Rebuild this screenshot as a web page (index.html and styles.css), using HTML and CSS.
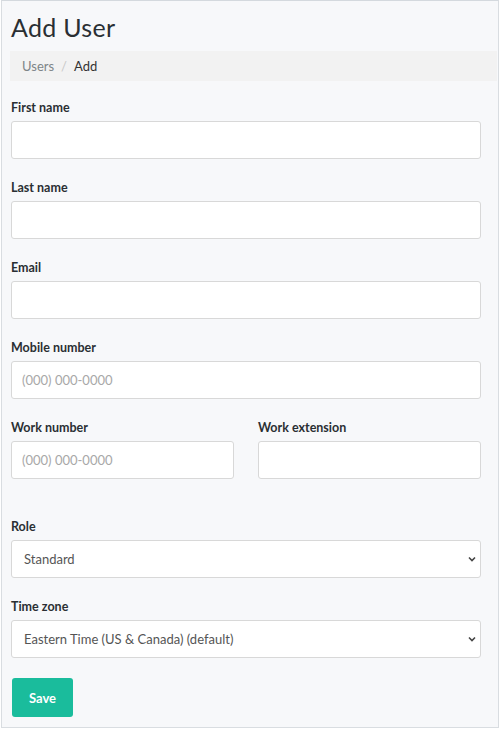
FILE: index.html
```html
<!DOCTYPE html>
<html lang="en">
<head>
<meta charset="utf-8">
<title>Add User</title>
<link rel="stylesheet" href="styles.css">
</head>
<body>
<div class="page">
  <h1 class="title">Add User</h1>
  <nav class="crumbs">
    <span class="crumb-link">Users</span>
    <span class="crumb-sep">/</span>
    <span class="crumb-current">Add</span>
  </nav>
  <form class="form">
    <div class="field">
      <label class="label">First name</label>
      <input class="control" type="text">
    </div>
    <div class="field">
      <label class="label">Last name</label>
      <input class="control" type="text">
    </div>
    <div class="field">
      <label class="label">Email</label>
      <input class="control" type="text">
    </div>
    <div class="field">
      <label class="label">Mobile number</label>
      <input class="control" type="text" placeholder="(000) 000-0000">
    </div>
    <div class="row">
      <div class="field">
        <label class="label">Work number</label>
        <input class="control" type="text" placeholder="(000) 000-0000">
      </div>
      <div class="field">
        <label class="label">Work extension</label>
        <input class="control" type="text">
      </div>
    </div>
    <div class="field">
      <label class="label">Role</label>
      <div class="select-wrap">
        <select class="control select"><option>Standard</option></select>
        <svg class="chev" width="8" height="6" viewBox="0 0 8 6"><path d="M1 1.5 L4 4.5 L7 1.5" fill="none" stroke="#444" stroke-width="1.6"/></svg>
      </div>
    </div>
    <div class="field">
      <label class="label">Time zone</label>
      <div class="select-wrap">
        <select class="control select"><option>Eastern Time (US &amp; Canada) (default)</option></select>
        <svg class="chev" width="8" height="6" viewBox="0 0 8 6"><path d="M1 1.5 L4 4.5 L7 1.5" fill="none" stroke="#444" stroke-width="1.6"/></svg>
      </div>
    </div>
    <button class="btn" type="button">Save</button>
  </form>
</div>
</body>
</html>
```

FILE: styles.css
```css
* { box-sizing: border-box; }
html, body { margin: 0; padding: 0; background: #ffffff; }
body {
  font-family: Lato, "Open Sans", "Liberation Sans", sans-serif;
  color: #333;
}
.page {
  margin-left: 1px;
  width: 498px;
  height: 728px;
  border: 1px solid #d9dde1;
  border-top-color: #d4d9de;
  background: #f7f8fa;
  padding: 0 1px 0 9px;
}
.title {
  margin: 0;
  padding-top: 11px;
  font-size: 25px;
  line-height: 30px;
  font-weight: 400;
  color: #2a2f33;
  letter-spacing: 0.3px;
}
.crumbs {
  margin-top: 9px;
  margin-left: -1px;
  height: 30px;
  background: #f2f2f2;
  display: flex;
  align-items: center;
  padding-left: 12px;
  font-size: 13px;
}
.crumb-link { color: #7d8588; }
.crumb-sep { color: #c8c8c8; margin: 0 7px; }
.crumb-current { color: #333; }
.form {
  margin-top: 18px;
  padding-right: 16px;
  display: flex;
  flex-direction: column;
}
.field {
  display: flex;
  flex-direction: column;
  margin-bottom: 20px;
}
.label {
  font-size: 12.5px;
  line-height: 18px;
  font-weight: 700;
  color: #2a2f33;
  margin-bottom: 4px;
}
.control {
  height: 38px;
  width: 100%;
  border: 1px solid #d8d8d8;
  border-radius: 3px;
  background: #ffffff;
  font-family: Lato, "Open Sans", "Liberation Sans", sans-serif;
  font-size: 13px;
  color: #555;
  padding: 0 10px;
  outline: none;
}
.control::placeholder { color: #a8a8a8; }
.row {
  display: grid;
  grid-template-columns: 1fr 1fr;
  column-gap: 24px;
  margin-bottom: 19px;
}
.select-wrap { position: relative; }
.select {
  appearance: none;
  -webkit-appearance: none;
  padding-left: 12px;
}
.chev {
  position: absolute;
  right: 5px;
  top: 16px;
}
.btn {
  width: 61px;
  height: 39px;
  margin-top: 0;
  border: none;
  border-radius: 3px;
  background: #1abc9c;
  color: #ffffff;
  font-family: Lato, "Open Sans", "Liberation Sans", sans-serif;
  font-size: 13px;
  font-weight: 700;
  padding: 0;
  margin-left: 1px;
}
```
